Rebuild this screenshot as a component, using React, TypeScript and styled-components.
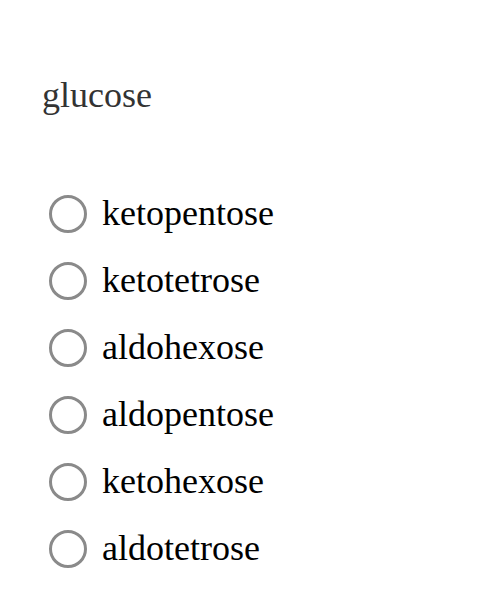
import React from 'react';
import styled, { createGlobalStyle } from 'styled-components';

const GlobalStyle = createGlobalStyle`
    html, body {
        margin: 0;
        padding: 0;
        background: #ffffff;
    }
    body {
        font-family: "Liberation Serif", "Times New Roman", serif;
    }
`;

const Card = styled.div`
    padding: 75px 0 0 42px;
`;

const Title = styled.div`
    font-size: 36px;
    line-height: 41px;
    color: #333333;
    margin-bottom: 64px;
`;

const OptionList = styled.div`
    display: flex;
    flex-direction: column;
    padding-left: 7px;
`;

const Option = styled.label`
    display: flex;
    align-items: center;
    height: 67px;
    font-size: 36px;
    line-height: 67px;
    color: #000000;
    cursor: pointer;
`;

const Ring = styled.span`
    box-sizing: border-box;
    width: 38px;
    height: 38px;
    border-radius: 50%;
    border: 3px solid #8a8a8a;
    margin-right: 15px;
    flex-shrink: 0;
`;

const options = ['ketopentose', 'ketotetrose', 'aldohexose', 'aldopentose', 'ketohexose', 'aldotetrose'];

const App: React.FC = () => (
    <>
        <GlobalStyle />
        <Card>
            <Title>glucose</Title>
            <OptionList>
                {options.map((o) => (
                    <Option key={o}>
                        <Ring />
                        <span>{o}</span>
                    </Option>
                ))}
            </OptionList>
        </Card>
    </>
);

export default App;
